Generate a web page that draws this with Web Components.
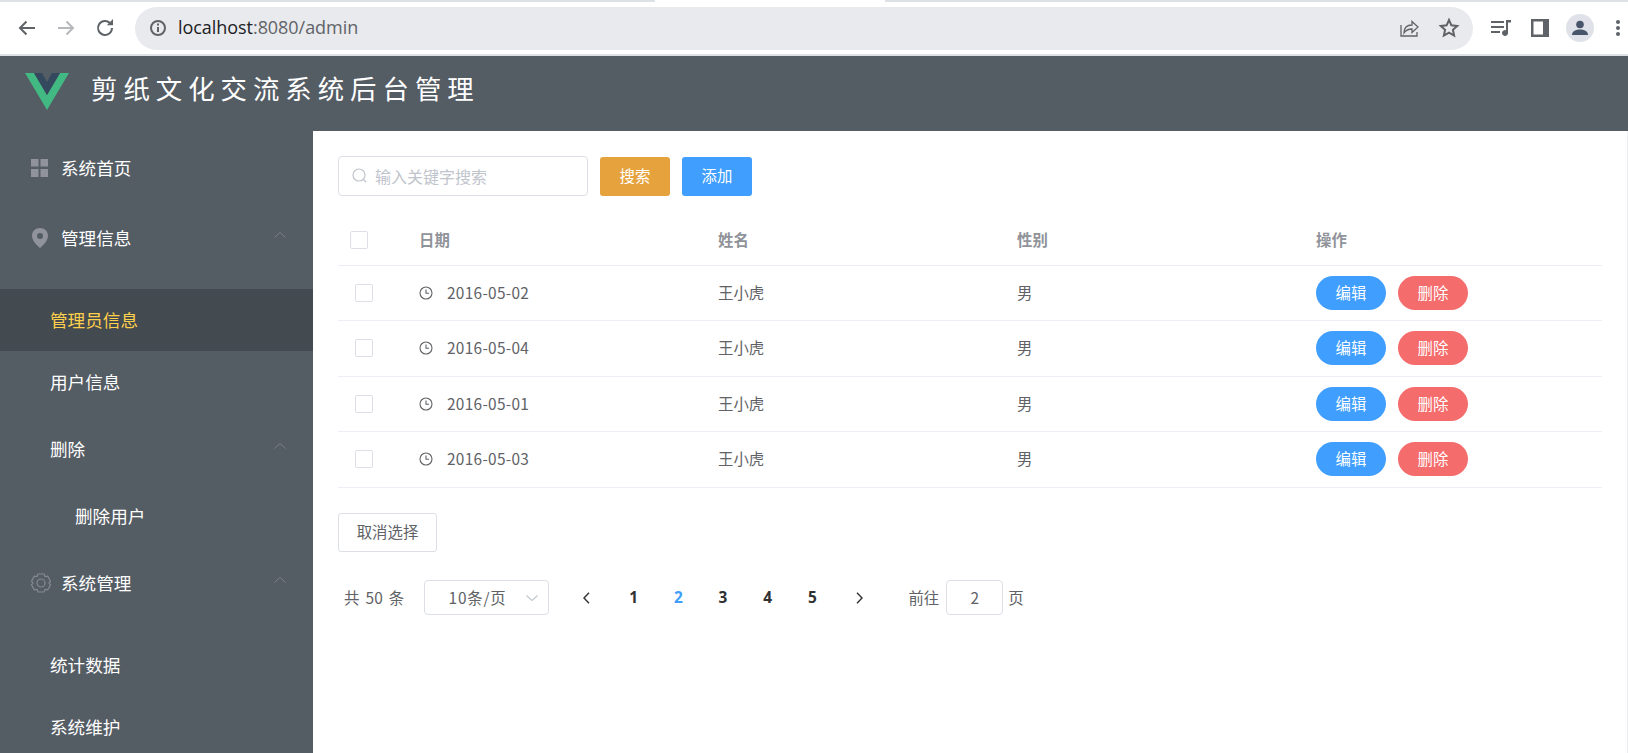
<!DOCTYPE html>
<html lang="zh">
<head>
<meta charset="UTF-8">
<title>admin</title>
<style>
    html, body { margin: 0; height: 100%; overflow: hidden; background: #fff; }
    body { font-family: "Noto Sans CJK SC", "Noto Sans", sans-serif; }
    #app { display: flex; flex-direction: column; height: 753px; }
    #main { display: flex; flex: 1; min-height: 0; }
</style>
</head>
<body>

<template id="browser-bar-template">
    <style>
        :host { display: block; flex: none; background: #fff; border-bottom: 2px solid #dee1e6; height: 54px; }
        .tabs { height: 2px; background: linear-gradient(to right, #dee1e6 655px, #fff 655px, #fff 885px, #dee1e6 885px); }
        .bar { display: flex; align-items: center; height: 52px; position: relative; }
        svg { display: block; flex: none; }
        .nav { display: flex; align-items: center; gap: 15px; margin-left: 15px; }
        .pill { margin-left: 18px; width: 1338px; height: 43px; border-radius: 22px; background: #e8eaed; display: flex; align-items: center; padding-left: 13px; box-sizing: border-box; }
        .url { margin-left: 10px; font: 18px "Open Sans", "Liberation Sans", sans-serif; letter-spacing: -.05px; color: #5f6368; position: relative; top: -1px; }
        .url b { font-weight: 400; color: #202124; }
        .right { margin-left: auto; display: flex; align-items: center; gap: 17px; padding-right: 12px; }
        .tools { display: flex; align-items: center; margin-left: 10px; }
        .avatar { width: 28px; height: 28px; border-radius: 50%; background: #dfe2e8; display: flex; align-items: center; justify-content: center; }
    </style>
    <div class="tabs"></div>
    <div class="bar">
        <div class="nav">
            <svg width="24" height="24" viewBox="0 0 24 24" fill="none" stroke="#5f6368" stroke-width="2"><path d="M20 12H5M11.500 5.500 5 12l6.500 6.500"/></svg>
            <svg width="24" height="24" viewBox="0 0 24 24" fill="none" stroke="#b6b8bb" stroke-width="2"><path d="M4 12h15M12.500 5.500 19 12l-6.500 6.500"/></svg>
            <svg width="24" height="24" viewBox="0 0 24 24" fill="none" stroke="#5f6368" stroke-width="2"><path d="M19 12a7 7 0 1 1-2.100-5"/><path d="M20 3v6.200h-6.200z" fill="#5f6368" stroke="none"/></svg>
        </div>
        <div class="pill">
            <svg width="20" height="20" viewBox="0 0 20 20" fill="none" stroke="#5f6368" stroke-width="2"><circle cx="10" cy="10" r="7"/><path d="M10 9v5M10 5.500v2"/></svg>
            <span class="url"><b>localhost</b>:8080/admin</span>
            <div class="right">
                <svg width="22" height="22" viewBox="0 0 22 22" fill="none" stroke="#5f6368" stroke-width="1.300"><path d="M3 8v11h16v-4"/><path d="M6 16c0-5 3-8 8-8V4.500l6 5.500-6 5.500V12c-3.500 0-6 1-8 4z"/></svg>
                <svg width="24" height="24" viewBox="0 0 24 24" fill="none" stroke="#5f6368" stroke-width="2"><path d="m12 4 2.400 5.300 5.800.6-4.300 3.900 1.200 5.700-5.100-2.900-5.100 2.900 1.200-5.700-4.300-3.900 5.800-.6z"/></svg>
            </div>
        </div>
        <div class="tools">
            <svg style="margin-left:6px" width="24" height="24" viewBox="0 0 24 24" fill="#5f6368"><path d="M2 5h13v2H2zM2 10h13v2H2zM2 15h9v2H2z"/><path d="M17 4h5v2.500h-3V17a3 3 0 1 1-2-2.800z"/></svg>
            <svg style="margin-left:15px" width="24" height="24" viewBox="0 0 24 24" fill="#5f6368"><path fill-rule="evenodd" d="M3 3h18v18H3zM5.500 5.500v13H15v-13z"/></svg>
            <div class="avatar" style="margin-left:14px">
                <svg width="20" height="20" viewBox="0 0 20 20" fill="#48566b"><circle cx="10" cy="6.500" r="3.800"/><path d="M2 17c0-4 4-5.500 8-5.500s8 1.500 8 5.500z"/></svg>
            </div>
            <svg style="margin-left:21px" width="6" height="20" viewBox="0 0 6 20" fill="#5f6368"><circle cx="3" cy="4" r="2"/><circle cx="3" cy="10" r="2"/><circle cx="3" cy="16" r="2"/></svg>
        </div>
    </div>
</template>

<template id="app-header-template">
    <style>
        :host { display: flex; flex: none; align-items: center; height: 75px; background: #545c64; }
        .logo { margin: -4px 0 0 25px; display: block; }
        .title { margin: -10px 0 0 22px; font-size: 26.400px; letter-spacing: 6px; color: #fff; font-family: "Noto Sans CJK SC", serif; font-weight: 400; line-height: 1; white-space: nowrap; }
    </style>
    <svg class="logo" width="44" height="37" viewBox="0 0 44 37">
        <path d="M0 0h9l13 22L35 0h9L22 37z" fill="#42b883"/>
        <path d="M9 0h8l5 9 5-9h8L22 22z" fill="#35495e"/>
    </svg>
    <span class="title"><slot></slot></span>
</template>

<template id="side-nav-template">
    <style>
        :host { display: block; flex: none; width: 313px; background: #545c64; overflow: hidden; }
    </style>
    <slot></slot>
</template>

<template id="nav-item-template">
    <style>
        :host { display: flex; align-items: center; position: relative; box-sizing: border-box; height: var(--h, 62px); padding-left: var(--indent, 50px); padding-bottom: 2px; color: #fff; font-size: 17.600px; white-space: nowrap; }
        :host([active]) { background: #434a50; color: #ffd04b; }
        ::slotted(svg) { position: absolute; left: 30px; top: 50%; transform: translateY(-50%); }
        .arrow { position: absolute; right: 27px; top: 50%; margin-top: -7px; display: none; }
        :host([open]) .arrow { display: block; }
    </style>
    <slot name="icon"></slot>
    <slot></slot>
    <svg class="arrow" width="12" height="8" viewBox="0 0 12 8" fill="none" stroke="#7b8187" stroke-width="1"><path d="m.5 6.500 5.500-5 5.500 5"/></svg>
</template>

<template id="el-button-template">
    <style>
        :host { display: inline-flex; align-items: center; justify-content: center; box-sizing: border-box; height: var(--bh, 39px); width: var(--bw, 70px); padding-bottom: 2px; border-radius: 3px; font-size: 15.400px; color: #fff; background: #409eff; flex: none; }
        :host([kind="warning"]) { background: #e6a23c; }
        :host([kind="danger"]) { background: #f56c6c; }
        :host([kind="plain"]) { background: #fff; border: 1px solid #dcdfe6; color: #606266; }
        :host([round]) { border-radius: 18px; }
    </style>
    <slot></slot>
</template>

<template id="search-bar-template">
    <style>
        :host { display: flex; align-items: center; gap: 12px; height: 40px; }
        .input { width: 250px; height: 40px; box-sizing: border-box; border: 1px solid #dcdfe6; border-radius: 4px; display: flex; align-items: center; padding: 0 0 1px 12px; color: #c0c4cc; font-size: 16px; }
        svg { display: block; margin-right: 7px; }
    </style>
    <div class="input">
        <svg width="17" height="17" viewBox="0 0 17 17" fill="none" stroke="#c0c4cc" stroke-width="1.200"><circle cx="8" cy="8" r="6"/><path d="m12.500 12.500 2.500 2.500"/></svg>
        <slot name="hint"></slot>
    </div>
    <slot></slot>
</template>

<template id="data-table-template">
    <style>
        :host { display: block; margin-top: 20px; }
        .grid { display: grid; grid-template-columns: 65px 299px 299px 299px 302px; }
    </style>
    <div class="grid"><slot></slot></div>
</template>

<template id="table-row-template">
    <style>
        :host { display: grid; grid-column: 1 / -1; grid-template-columns: subgrid; align-items: center; height: 55.500px; box-sizing: border-box; border-bottom: 1px solid #ebeef5; color: #606266; font-size: 15.400px; line-height: 20px; }
        :host([head]) { height: 49.600px; color: #909399; font-weight: 700; }
        .check { width: 18px; height: 18px; box-sizing: border-box; border: 1px solid #dcdfe6; border-radius: 2px; background: #fff; margin-left: 17px; }
        :host([head]) .check { margin: -1px 0 0 12px; }
        ::slotted(*) { padding-left: 16px; position: relative; top: -1px; }
        ::slotted(.ops) { top: 0; }
    </style>
    <div class="check"></div>
    <slot></slot>
</template>

<template id="date-cell-template">
    <style>
        :host { display: flex; align-items: center; gap: 14px; letter-spacing: .32px; }
        svg { display: block; flex: none; position: relative; top: 1px; }
    </style>
    <svg width="14" height="14" viewBox="0 0 14 14" fill="none" stroke="#606266" stroke-width="1.100"><circle cx="7" cy="7" r="6"/><path d="M7 3.500V7.200h3"/></svg>
    <span><slot></slot></span>
</template>

<template id="page-nav-template">
    <style>
        :host { display: flex; align-items: center; height: 36px; margin-top: 28px; padding-left: 6px; color: #606266; font-size: 15.400px; white-space: nowrap; }
        .total { word-spacing: 2px; letter-spacing: .3px; position: relative; top: -1px; }
        .select { display: flex; align-items: center; width: 125px; height: 35px; box-sizing: border-box; border: 1px solid #dcdfe6; border-radius: 4px; margin-left: 19px; padding: 0 0 2px 24px; position: relative; letter-spacing: .8px; }
        .select svg { position: absolute; right: 10px; top: 13px; }
        .pages { display: flex; align-items: center; margin-left: 13px; }
        .pages div { width: 44.700px; font-size: 15.400px; font-weight: 700; color: #303133; font-family: "Open Sans", sans-serif; display: flex; justify-content: center; align-items: center; }
        .pages .on { color: #409eff; }
        .pages .arr { width: 49.700px; }
        .jump { display: flex; align-items: center; margin-left: 24px; }
        .jump span { position: relative; top: -1px; }
        .box { width: 57px; height: 35px; box-sizing: border-box; border: 1px solid #dcdfe6; border-radius: 4px; margin: 0 5px 0 7px; padding-bottom: 2px; display: flex; align-items: center; justify-content: center; }
    </style>
    <span class="total">共 50 条</span>
    <div class="select">10条/页
        <svg width="12" height="8" viewBox="0 0 12 8" fill="none" stroke="#c0c4cc" stroke-width="1.100"><path d="m.5 1.500 5.500 5 5.500-5"/></svg>
    </div>
    <div class="pages">
        <div class="arr"><svg width="9" height="12" viewBox="0 0 9 12" fill="none" stroke="#303133" stroke-width="1.400"><path d="M7 .8 2 6l5 5.200"/></svg></div>
        <div>1</div><div class="on">2</div><div>3</div><div>4</div><div>5</div>
        <div class="arr"><svg width="9" height="12" viewBox="0 0 9 12" fill="none" stroke="#303133" stroke-width="1.400"><path d="m2 .8 5 5.200-5 5.200"/></svg></div>
    </div>
    <div class="jump"><span>前往</span><div class="box">2</div><span>页</span></div>
</template>

<template id="admin-panel-template">
    <style>
        :host { display: block; flex: 1; min-width: 0; background: #fff; padding: 25px 26px 0 25px; box-sizing: border-box; border-right: 1px solid #eceef2; }
        .actions { margin-top: 25px; display: flex; }
    </style>
    <slot name="toolbar"></slot>
    <slot></slot>
    <div class="actions"><slot name="actions"></slot></div>
    <slot name="pager"></slot>
</template>

<div id="app">
    <browser-bar></browser-bar>
    <app-header>剪纸文化交流系统后台管理</app-header>
    <div id="main">
        <side-nav>
            <nav-item style="--h:74px;--indent:61px">
                <svg slot="icon" width="18" height="18" viewBox="0 0 18 18" fill="#909399"><path d="M1 0h7.500v7.500H1zM10.500 0H18v7.500h-7.500zM1 10h7.500v8H1zM10.500 10H18v8h-7.500z"/></svg>
                系统首页
            </nav-item>
            <nav-item open style="--h:66px;--indent:61px;margin-bottom:18px">
                <svg slot="icon" width="20" height="20" viewBox="0 0 20 20" fill="#909399"><path fill-rule="evenodd" d="M10 0c4.600 0 8 3.300 8 7.800 0 4-3.300 8.600-8 12.200-4.700-3.600-8-8.200-8-12.200C2 3.300 5.400 0 10 0zm0 5a3 3 0 1 0 0 6 3 3 0 0 0 0-6z"/></svg>
                管理信息
            </nav-item>
            <nav-item active>管理员信息</nav-item>
            <nav-item style="--h:62px">用户信息</nav-item>
            <nav-item open style="--h:72px">删除</nav-item>
            <nav-item style="--indent:75px">删除用户</nav-item>
            <nav-item open style="--h:72px;--indent:61px;margin-bottom:15px">
                <svg slot="icon" width="22" height="22" viewBox="0 0 22 22" fill="none" stroke="#858a90" stroke-width="1.200"><path d="M8 2h6l1 2.500 2.700-.3 2.800 5L19 11l1.500 1.800-2.800 5-2.700-.3-1 2.500H8l-1-2.500-2.700.3-2.800-5L3 11 1.500 9.200l2.800-5L7 4.500z"/><circle cx="11" cy="11" r="4"/></svg>
                系统管理
            </nav-item>
            <nav-item>统计数据</nav-item>
            <nav-item>系统维护</nav-item>
        </side-nav>
        <admin-panel>
            <search-bar slot="toolbar">
                <span slot="hint">输入关键字搜索</span>
                <el-button kind="warning">搜索</el-button>
                <el-button>添加</el-button>
            </search-bar>
            <data-table>
                <table-row head><span>日期</span><span>姓名</span><span>性别</span><span>操作</span></table-row>
                <table-row><date-cell>2016-05-02</date-cell><span>王小虎</span><span>男</span><span class="ops"><row-actions></row-actions></span></table-row>
                <table-row><date-cell>2016-05-04</date-cell><span>王小虎</span><span>男</span><span class="ops"><row-actions></row-actions></span></table-row>
                <table-row><date-cell>2016-05-01</date-cell><span>王小虎</span><span>男</span><span class="ops"><row-actions></row-actions></span></table-row>
                <table-row><date-cell>2016-05-03</date-cell><span>王小虎</span><span>男</span><span class="ops"><row-actions></row-actions></span></table-row>
            </data-table>
            <el-button slot="actions" kind="plain" style="--bw:99px;--bh:39px">取消选择</el-button>
            <page-nav slot="pager"></page-nav>
        </admin-panel>
    </div>
</div>

<script>
    // every element here is the same: clone its template into an open shadow root
    const names = ['browser-bar', 'app-header', 'side-nav', 'nav-item', 'el-button', 'search-bar',
        'data-table', 'table-row', 'date-cell', 'page-nav', 'admin-panel'];
    names.forEach(name => {
        customElements.define(name, class extends HTMLElement {
            constructor() {
                super();
                const template = document.getElementById(name + '-template').content;
                this.attachShadow({mode: 'open'}).appendChild(template.cloneNode(true));
            }
        });
    });

    customElements.define('row-actions', class extends HTMLElement {
        constructor() {
            super();
            this.attachShadow({mode: 'open'}).innerHTML = `
                <style>
                    :host { display: flex; gap: 12px; --bh: 34px; }
                </style>
                <el-button round>编辑</el-button>
                <el-button round kind="danger">删除</el-button>`;
        }
    });
</script>
</body>
</html>
